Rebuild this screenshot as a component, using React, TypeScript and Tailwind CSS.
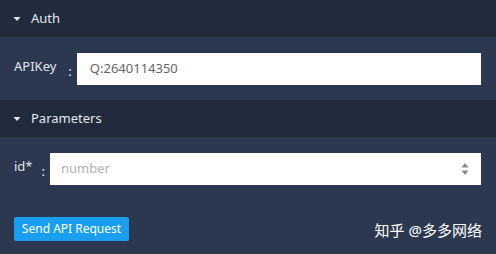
import React from "react";

const Tri = () => (
  <svg width="8" height="6" viewBox="0 0 8 6" className="mr-[10px]">
    <path d="M0.5 1 L7.5 1 L4 5 Z" fill="#e6e9ef" />
  </svg>
);

export default function App() {
  return (
    <div
      className="w-[496px] h-[254px] bg-[#2b3850] overflow-hidden text-[13px]"
      style={{ fontFamily: '"Noto Sans", "Noto Sans CJK SC", sans-serif' }}
    >
      <div className="h-[37px] bg-[#222b3c] flex items-center pl-[13px] text-[#e3e7ee]">
        <Tri />
        <span>Auth</span>
      </div>
      <div className="h-[63px] pt-[16px] pl-[14px] pr-[15px] flex items-start">
        <span className="text-[#e3e7ee] leading-[26px] mr-[12px]">APIKey</span>
        <span className="text-[#e3e7ee] leading-[36px] mr-[5px]">:</span>
        <div className="flex-1 h-[32px] bg-white flex items-center pl-[13px] text-[#666]">
          Q:2640114350
        </div>
      </div>
      <div className="h-[37px] bg-[#222b3c] flex items-center pl-[13px] text-[#e3e7ee]">
        <Tri />
        <span>Parameters</span>
      </div>
      <div className="pt-[16px] pl-[14px] pr-[15px]">
        <div className="flex items-start h-[32px]">
          <span className="text-[#e3e7ee] leading-[26px] mr-[9px]">id*</span>
          <span className="text-[#e3e7ee] leading-[36px] mr-[5px]">:</span>
          <div className="flex-1 h-[32px] bg-white flex items-center pl-[11px] pr-[12px] text-[#b0b0b0] justify-between">
            <span>number</span>
            <svg width="8" height="14" viewBox="0 0 8 14">
              <path d="M4 1 L7.5 5.5 L0.5 5.5 Z" fill="#8a8a8a" />
              <path d="M4 13 L7.5 8.5 L0.5 8.5 Z" fill="#8a8a8a" />
            </svg>
          </div>
        </div>
        <div className="flex items-center justify-between mt-[32px]">
          <div className="w-[115px] h-[24px] bg-[#1a9ff0] rounded-[2px] flex items-center justify-center text-white text-[12px]">
            Send API Request
          </div>
          <span className="text-white text-[15px] mr-[-1px] mt-[2px]">知乎 @多多网络</span>
        </div>
      </div>
    </div>
  );
}
